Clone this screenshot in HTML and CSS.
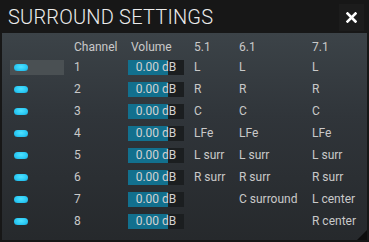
FILE: index.html
```html
<!DOCTYPE html>
<html lang="en">
<head>
    <meta charset="UTF-8">
    <meta name="viewport" content="width=device-width, initial-scale=1.0">
    <title>Surround Settings</title>
    <link rel="stylesheet" href="styles.css">
</head>
<body>
    <div class="titlebar">
        <h1>SURROUND SETTINGS</h1>
        <div class="close">
            <svg width="11" height="11" viewBox="0 0 11 11">
                <path d="M1.5 1.5 L9.5 9.5 M9.5 1.5 L1.5 9.5" stroke="#ffffff" stroke-width="2.6" stroke-linecap="square"/>
            </svg>
        </div>
    </div>

    <div class="panel">
        <div class="grid head">
            <span></span>
            <span>Channel</span>
            <span class="vhead">Volume</span>
            <span>5.1</span>
            <span>6.1</span>
            <span>7.1</span>
        </div>

        <div class="grid row">
            <span class="ledcell active"><i class="led"></i></span>
            <span>1</span>
            <span><b class="vol">0.00 dB</b></span>
            <span>L</span><span>L</span><span>L</span>
        </div>
        <div class="grid row">
            <span class="ledcell"><i class="led"></i></span>
            <span>2</span>
            <span><b class="vol">0.00 dB</b></span>
            <span>R</span><span>R</span><span>R</span>
        </div>
        <div class="grid row">
            <span class="ledcell"><i class="led"></i></span>
            <span>3</span>
            <span><b class="vol">0.00 dB</b></span>
            <span>C</span><span>C</span><span>C</span>
        </div>
        <div class="grid row">
            <span class="ledcell"><i class="led"></i></span>
            <span>4</span>
            <span><b class="vol">0.00 dB</b></span>
            <span>LFe</span><span>LFe</span><span>LFe</span>
        </div>
        <div class="grid row">
            <span class="ledcell"><i class="led"></i></span>
            <span>5</span>
            <span><b class="vol">0.00 dB</b></span>
            <span>L surr</span><span>L surr</span><span>L surr</span>
        </div>
        <div class="grid row">
            <span class="ledcell"><i class="led"></i></span>
            <span>6</span>
            <span><b class="vol">0.00 dB</b></span>
            <span>R surr</span><span>R surr</span><span>R surr</span>
        </div>
        <div class="grid row">
            <span class="ledcell"><i class="led"></i></span>
            <span>7</span>
            <span><b class="vol">0.00 dB</b></span>
            <span></span><span>C surround</span><span>L center</span>
        </div>
        <div class="grid row">
            <span class="ledcell"><i class="led"></i></span>
            <span>8</span>
            <span><b class="vol">0.00 dB</b></span>
            <span></span><span></span><span>R center</span>
        </div>

        <div class="resize"></div>
    </div>
</body>
</html>
```

FILE: styles.css
```css
* {
    margin: 0;
    padding: 0;
    box-sizing: border-box;
}

body {
    width: 369px;
    height: 242px;
    background-color: #171717;
    font-family: Roboto, "Liberation Sans", sans-serif;
    overflow: hidden;
}

.titlebar {
    height: 33px;
    display: flex;
    align-items: center;
    justify-content: space-between;
    padding: 0 5px 0 8px;
}

h1 {
    font-weight: 300;
    font-size: 20px;
    color: #ececec;
    letter-spacing: 0.2px;
}

.close {
    width: 25px;
    height: 27px;
    background-color: #1c1c1c;
    display: flex;
    align-items: center;
    justify-content: center;
    margin-top: 1px;
}

.panel {
    position: relative;
    margin: 0 2px;
    height: 207px;
    padding: 7px 0 0 8px;
    background: linear-gradient(180deg, #3c4348 0%, #30353a 40%, #26292c 100%);
    color: #c9c9c9;
    font-size: 12px;
}

.grid {
    display: grid;
    grid-template-columns: 64px 54px 66px 45px 73px 1fr;
    align-items: center;
    height: 15px;
    line-height: 15px;
    white-space: nowrap;
}

.head {
    margin-bottom: 5px;
}

.vhead {
    padding-left: 3px;
}

.row {
    margin-bottom: 7px;
}

.ledcell {
    width: 54px;
    height: 15px;
    display: flex;
    align-items: center;
    padding-left: 4px;
}

.ledcell.active {
    background-color: #4a5053;
}

.led {
    display: block;
    width: 14px;
    height: 7px;
    border-radius: 4px;
    background: radial-gradient(ellipse at 50% 40%, #4fe2ff 0%, #29c8f4 60%, #1aa7d6 100%);
}

.vol {
    display: block;
    width: 56px;
    height: 15px;
    font-weight: normal;
    text-align: center;
    color: #d2d2d2;
    background: linear-gradient(90deg, #12708e 0%, #12708e 71%, #1b1e20 71%, #1b1e20 100%);
}

.resize {
    position: absolute;
    right: 0;
    bottom: 0;
    width: 0;
    height: 0;
    border-left: 10px solid transparent;
    border-bottom: 10px solid #0d0d0d;
}
```
